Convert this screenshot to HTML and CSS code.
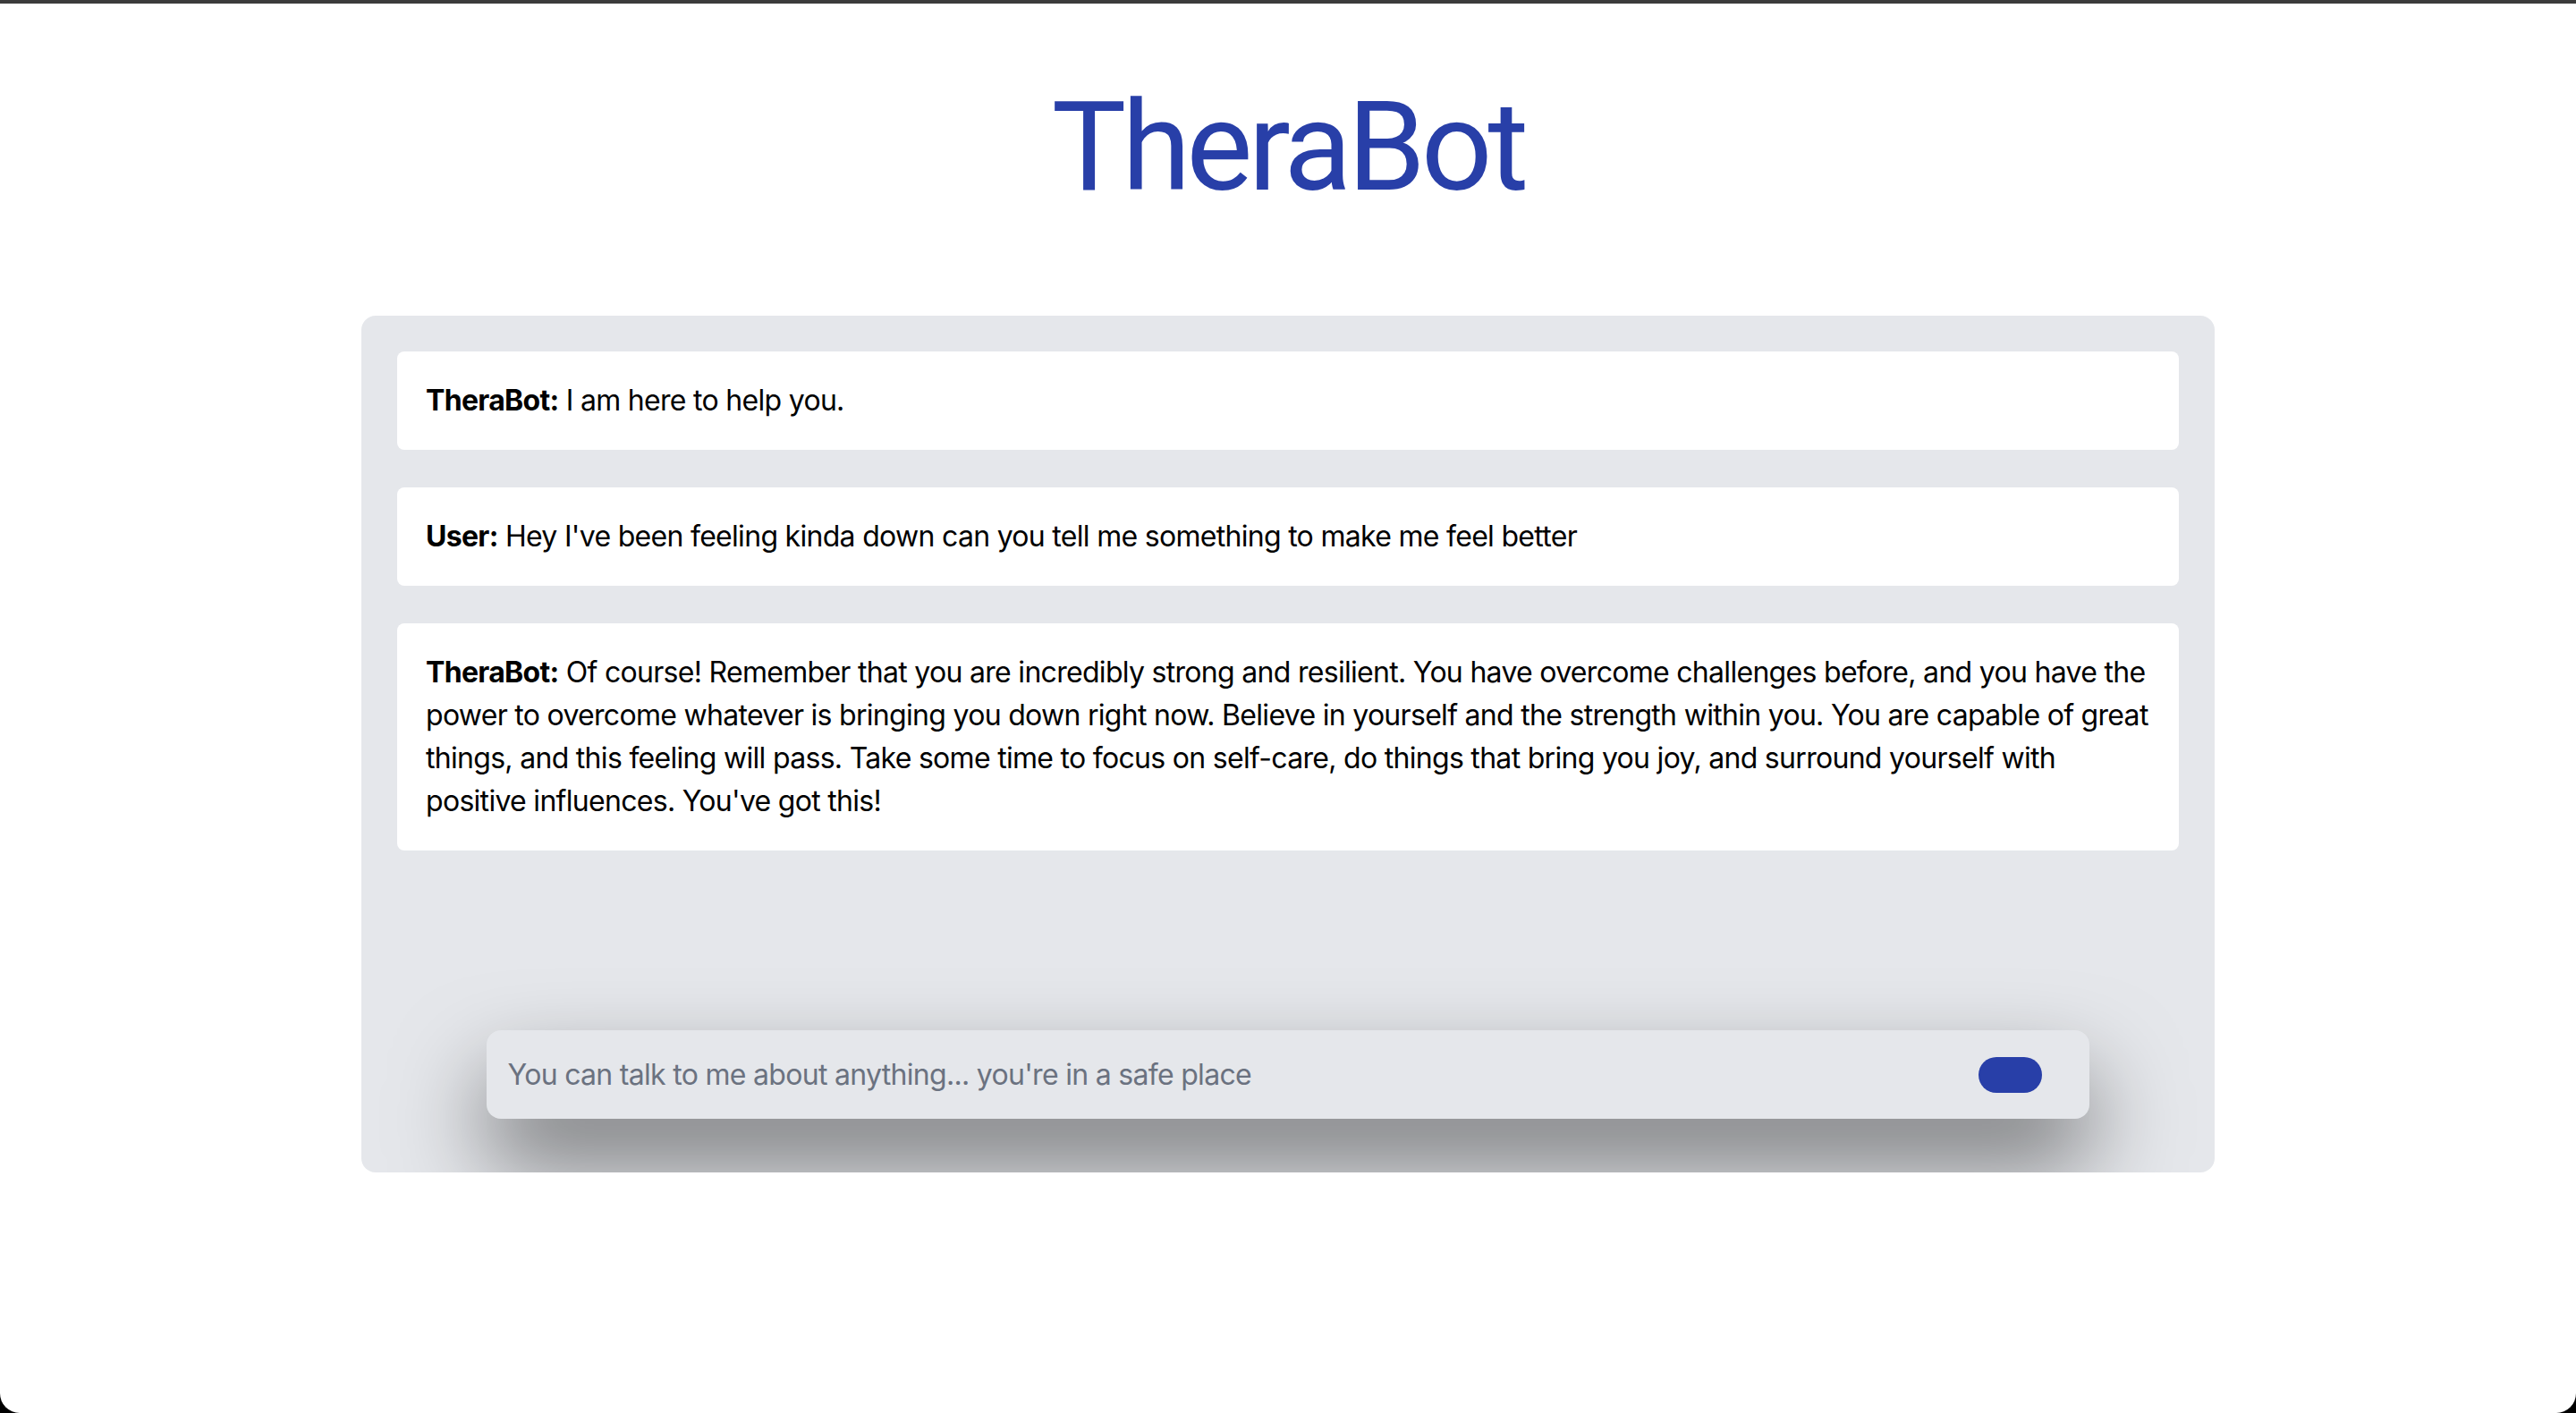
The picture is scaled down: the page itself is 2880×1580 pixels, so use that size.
FILE: index.html
```html
<!DOCTYPE html>
<html lang="en">
<head>
<meta charset="utf-8">
<title>TheraBot</title>
<link rel="stylesheet" href="styles.css">
</head>
<body>
<div class="page">
  <header class="header">
    <h1 class="title">TheraBot</h1>
  </header>
  <main class="chat">
    <section class="messages">
      <div class="msg"><strong>TheraBot:</strong> I am here to help you.</div>
      <div class="msg"><strong>User:</strong> Hey I've been feeling kinda down can you tell me something to make me feel better</div>
      <div class="msg"><strong>TheraBot:</strong> Of course! Remember that you are incredibly strong and resilient. You have overcome challenges before, and you have the power to overcome whatever is bringing you down right now. Believe in yourself and the strength within you. You are capable of great things, and this feeling will pass. Take some time to focus on self-care, do things that bring you joy, and surround yourself with positive influences. You've got this!</div>
    </section>
    <form class="composer">
      <input class="composer-input" type="text" placeholder="You can talk to me about anything... you're in a safe place">
      <button class="send" type="button" aria-label="Send"></button>
    </form>
  </main>
</div>
<div class="window-frame"></div>
</body>
</html>
```
FILE: styles.css
```css
* { box-sizing: border-box; }
html, body { margin: 0; padding: 0; }
body {
  background: #ffffff;
  font-family: Inter, "Liberation Sans", Arial, sans-serif;
  color: #000;
  min-height: 1580px;
  border-top: 4px solid #3b3b3b;
}
.page {
  display: flex;
  flex-direction: column;
  align-items: center;
}
.header {
  padding-top: 80px;
  padding-bottom: 109px;
}
.title {
  margin: 0;
  font-family: Roboto, "Open Sans", sans-serif;
  font-weight: 400;
  font-size: 140px;
  line-height: 160px;
  color: #283fa8;
  letter-spacing: -5px;
}
.chat {
  width: 2072px;
  background: #e5e7eb;
  border-radius: 16px;
  padding: 40px 40px 60px;
  overflow: hidden;
  display: flex;
  flex-direction: column;
}
.messages {
  height: 759px;
  display: flex;
  flex-direction: column;
  gap: 42px;
}
.msg {
  background: #ffffff;
  border-radius: 8px;
  padding: 31px 32px;
  font-size: 32px;
  line-height: 48px;
  letter-spacing: -0.7px;
  color: #000;
}
.msg strong { font-weight: 700; }
.composer {
  width: 90%;
  margin: 0 auto;
  height: 99px;
  background: #e5e7eb;
  border-radius: 16px;
  display: flex;
  align-items: center;
  padding: 0 53px 0 24px;
  box-shadow: 0 50px 100px 0 rgba(0, 0, 0, 0.5);
}
.composer-input {
  flex: 1;
  border: none;
  background: transparent;
  font-family: Inter, "Liberation Sans", Arial, sans-serif;
  font-size: 32px;
  letter-spacing: -0.7px;
  color: #111;
  outline: none;
  padding: 0;
}
.composer-input::placeholder { color: #6b7280; }
.send {
  width: 71px;
  height: 40px;
  border: none;
  border-radius: 20px;
  background: #283fa8;
  padding: 0;
}
.window-frame {
  position: fixed;
  inset: 0;
  pointer-events: none;
  border-radius: 0 0 22px 22px;
  box-shadow: 0 0 0 40px #000;
}
```
